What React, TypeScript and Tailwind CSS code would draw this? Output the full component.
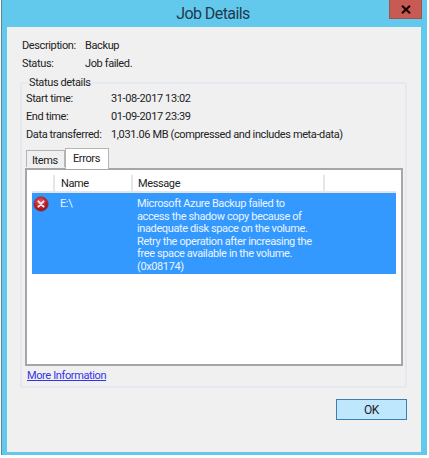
import React from 'react';

const font = "font-['Roboto','Open_Sans',sans-serif]";

function ErrorIcon() {
  return (
    <svg width="16" height="16" viewBox="0 0 16 16" className="shrink-0">
      <defs>
        <radialGradient id="err" cx="45%" cy="35%" r="70%">
          <stop offset="0%" stopColor="#e8596a" />
          <stop offset="60%" stopColor="#b8202c" />
          <stop offset="100%" stopColor="#7c0f18" />
        </radialGradient>
      </defs>
      <circle cx="8" cy="8" r="7.2" fill="url(#err)" stroke="#8f3b42" strokeWidth="0.8" />
      <path d="M5.4 5.4l5.2 5.2M10.6 5.4l-5.2 5.2" stroke="#f6e9ea" strokeWidth="2" strokeLinecap="round" />
    </svg>
  );
}

function InfoRow({ label, value, labelWidth }: { label: string; value: string; labelWidth: string }) {
  return (
    <div className="flex h-[18px] items-center whitespace-nowrap">
      <span className={labelWidth}>{label}</span>
      <span>{value}</span>
    </div>
  );
}

export default function App() {
  return (
    <div className={`w-[429px] h-[458px] bg-white overflow-hidden text-[11px] tracking-[-0.38px] text-[#222222] ${font}`}>
      <div className="ml-[1px] w-[426px] h-[455px] bg-[#63c9ec] border-l border-[#5a8a9a] flex flex-col">
        {/* Title bar */}
        <div className="relative h-[27px] shrink-0 flex items-center justify-center text-[16px] tracking-[-0.6px] text-[#1f3a50]">
          <span className="mr-[3px]">Job Details</span>
          <button className="absolute top-0 left-[387px] w-[33px] h-[19px] bg-[#c75a52] border border-t-0 border-[#a0524c] flex items-center justify-center">
            <svg width="10" height="9" viewBox="0 0 10 9">
              <path d="M1 0.8l8 7.4M9 0.8l-8 7.4" stroke="#1a0505" strokeWidth="2.2" />
            </svg>
          </button>
        </div>

        {/* Client area */}
        <div className="ml-[5px] w-[414px] h-[425px] bg-[#f0f0f0] pt-[10px] flex flex-col">
          <div className="pl-[15px]">
            <InfoRow label="Description:" value="Backup" labelWidth="w-[63px]" />
            <InfoRow label="Status:" value="Job failed." labelWidth="w-[63px]" />
          </div>

          {/* Status details group */}
          <div className="ml-[13px] mt-[9px] w-[387px] h-[306px] border-2 border-[#e3e9ee] rounded-[2px] pl-[3px] flex flex-col">
            <div className="ml-[3px] -mt-[8px] w-fit bg-[#f0f0f0] px-[1px] h-[14px] leading-[14px] whitespace-nowrap">
              Status details
            </div>
            <div className="pl-[1px]">
              <InfoRow label="Start time:" value="31-08-2017 13:02" labelWidth="w-[85px]" />
              <InfoRow label="End time:" value="01-09-2017 23:39" labelWidth="w-[85px]" />
              <InfoRow
                label="Data transferred:"
                value="1,031.06 MB (compressed and includes meta-data)"
                labelWidth="w-[85px]"
              />
            </div>

            {/* Tabs */}
            <div className="relative z-10 mt-[4px] h-[20px] flex items-end pl-[1px]">
              <div className="w-[39px] h-[17px] mb-[1px] bg-[#f0f0f0] border border-b-0 border-[#b4b4b4] pl-[5px] leading-[19px]">Items</div>
              <div className="w-[44px] h-[21px] -mb-[1px] bg-white border border-b-0 border-[#b4b4b4] pl-[7px] leading-[19px]">Errors</div>
            </div>

            {/* Tab panel */}
            <div className="w-[378px] h-[198px] bg-white border-2 border-[#a6a6a6] pt-[5px] pl-[5px] pr-[5px]">
              <div className="h-[18px] flex border-b-2 border-[#e6e6e6]">
                <div className="w-[23px] border-r-2 border-[#e6e6e6]" />
                <div className="w-[78px] border-r-2 border-[#e6e6e6] pl-[6px] leading-[18px]">Name</div>
                <div className="w-[192px] border-r-2 border-[#e6e6e6] pl-[5px] leading-[18px]">Message</div>
                <div className="flex-1" />
              </div>
              <div className="h-[81px] bg-[#3399ff] text-[#eaf4ff] flex">
                <div className="w-[23px] pt-[3px] pl-[1px]">
                  <ErrorIcon />
                </div>
                <div className="w-[78px] pl-[5px] pt-[5px] leading-[12.5px]">E:\</div>
                <div className="flex-1 pl-[4px] pt-[5px] leading-[12.5px] whitespace-pre">
                  {'Microsoft Azure Backup failed to\naccess the shadow copy because of\ninadequate disk space on the volume.\nRetry the operation after increasing the\nfree space available in the volume.\n(0x08174)'}
                </div>
              </div>
            </div>

            <a className="ml-[2px] mt-[2px] text-[#3333ee] underline leading-[16px] w-fit">More Information</a>
          </div>

          {/* Footer */}
          <div className="mt-[11px] w-[400px] flex justify-end">
            <button className="w-[71px] h-[21px] bg-[#bee6fd] border border-[#3c7fb1] text-[12px] text-[#222222]">OK</button>
          </div>
        </div>
      </div>
    </div>
  );
}
